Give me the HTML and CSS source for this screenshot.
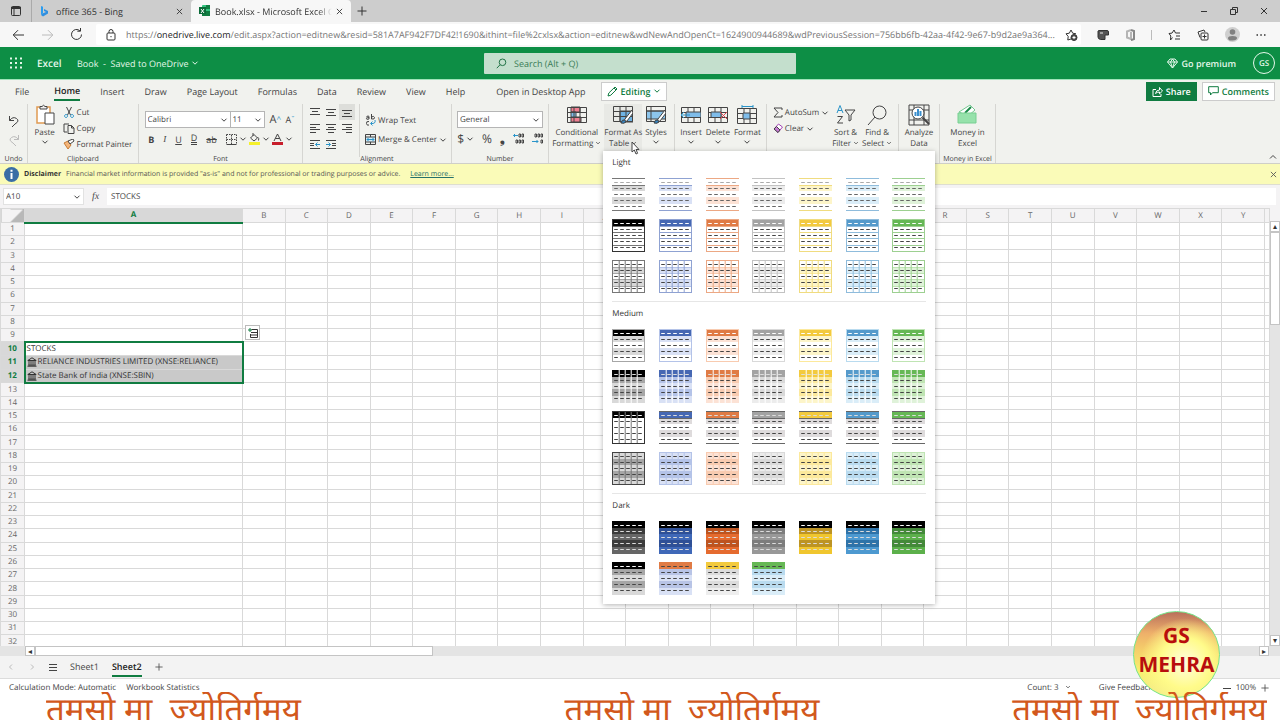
FILE: index.html
```html
<!DOCTYPE html>
<html lang="en">
<head>
    <meta charset="UTF-8">
    <title>Book.xlsx - Microsoft Excel Online</title>
    <link rel="stylesheet" href="styles.css">
</head>
<body>
    <svg class="symbols" aria-hidden="true">
        <symbol id="chev" viewBox="0 0 8 8"><path d="M1.500 2.700 4 5.200 6.500 2.700"/></symbol>
        <symbol id="close" viewBox="0 0 8 8"><path d="M1 1l6 6M7 1L1 7"/></symbol>
        <symbol id="plus" viewBox="0 0 10 10"><path d="M5 0.500v9M.5 5h9"/></symbol>
        <symbol id="bank" viewBox="0 0 10 10"><path d="M.8 3.500 5 .8l4.200 2.700zM2 4v4M4 4v4M6 4v4M8 4v4M.5 9.200h9M1.200 8.200h7.600"/></symbol>
        <symbol id="grid" viewBox="0 0 20 16"><path d="M.5.5h19v15H.5zM.5 5.500h19M.5 10.500h19M7 .5v15M13 .5v15"/></symbol>
    </svg>

    <!-- Browser -->
    <div class="tabstrip">
        <button class="tab-menu" aria-label="Tab actions"><svg width="12" height="12" viewBox="0 0 12 12"><rect x="1.500" y="1.500" width="9" height="9" rx="1"/><path d="M1 3h10" stroke-width="2"/><path d="M4 4v6"/></svg></button>
        <div class="browser-tab">
            <svg class="plain" width="9" height="11" viewBox="0 0 9 11"><path d="M1 0l2 .8v6.500L1 9z" fill="#2a9df0"/><path d="M1 9l2-1.700L6 6 4 5V3l4 2v2.500L3 10.500z" fill="#2f8fe0"/></svg>
            <span class="tab-title">office 365 - Bing</span>
            <button aria-label="Close tab"><svg width="7" height="7"><use href="#close"/></svg></button>
        </div>
        <div class="browser-tab active">
            <svg class="plain" width="12" height="12" viewBox="0 0 12 12"><rect x="3" y="0" width="8" height="11" rx="1" fill="#33c481"/><path d="M7 0h4v4H7zM3 6h8v5H3z" fill="#107c41"/><rect x="0" y="2" width="7" height="7" fill="#0b6a38"/><path d="M2 4l3 4M5 4L2 8" stroke="#fff"/></svg>
            <span class="tab-title fade">Book.xlsx - Microsoft Excel Online</span>
            <button aria-label="Close tab"><svg width="7" height="7"><use href="#close"/></svg></button>
        </div>
        <button class="new-tab" aria-label="New tab"><svg width="10" height="10"><use href="#plus"/></svg></button>
        <div class="window-buttons">
            <button aria-label="Minimize"><svg width="8" height="8" viewBox="0 0 8 8"><path d="M1 4.500h6"/></svg></button>
            <button aria-label="Restore"><svg width="8" height="8" viewBox="0 0 8 8"><path d="M.5 2.500h5v5h-5zM2.500 2V.5h5v5H6"/></svg></button>
            <button aria-label="Close"><svg width="8" height="8"><use href="#close"/></svg></button>
        </div>
    </div>
    <div class="addressbar">
        <button aria-label="Back"><svg width="13" height="12" viewBox="0 0 13 12"><path d="M12 6H1.500M6 1.200 1.200 6 6 10.800"/></svg></button>
        <button class="off" aria-label="Forward"><svg width="13" height="12" viewBox="0 0 13 12"><path d="M1 6h10.500M7 1.200 11.800 6 7 10.800"/></svg></button>
        <button aria-label="Reload"><svg width="13" height="13" viewBox="0 0 13 13"><path d="M11.500 6.500a5 5 0 1 1-1.600-3.700M10.500 0v3.200H7.300"/></svg></button>
        <div class="url-box">
            <svg width="10" height="12" viewBox="0 0 10 12"><rect x="1" y="4" width="8" height="7" rx="1"/><path d="M3 4V2.500a2 2 0 0 1 4 0V4M5 7v1.200"/></svg>
            <span class="url">https://<b>onedrive.live.com</b>/edit.aspx?action=editnew&amp;resid=581A7AF942F7DF42!1690&amp;ithint=file%2cxlsx&amp;action=editnew&amp;wdNewAndOpenCt=1624900944689&amp;wdPreviousSession=756bb6fb-42aa-4f42-9e67-b9d2ae9a364...</span>
            <button aria-label="Add favorite"><svg width="13" height="12" viewBox="0 0 13 12"><path d="M6 10 2.800 11l.4-3.600L1 4.800l3.300-.6L6 1l1.700 3.200 3.300.6"/><circle cx="9" cy="8.500" r="3" fill="#555"/><path d="M9 7v3M7.500 8.500h3" stroke="#fff"/></svg></button>
        </div>
        <div class="browser-tools">
            <svg width="12" height="12" viewBox="0 0 12 12"><path d="M2 1.500h8q1.500 0 1.500 1.500V6H8v4.500H3.500Q1 10 1 8V2z" fill="#555"/><path d="M3 4h3M9 8.500h3" stroke="#eee"/></svg>
            <svg width="10" height="12" viewBox="0 0 10 12"><path d="M6 1 2 2.500v6L6 10V3" stroke="#b5b5b5" stroke-width="2"/><path d="M6 1l3 1v8l-3 1.200" stroke="#888" stroke-width="2"/></svg>
            <span class="bar"></span>
            <svg width="13" height="12" viewBox="0 0 13 12"><path d="M4.500 8.500 2.500 11l.3-4L1 4.500l3-.4L6 1l1.500 3H12M8 7h4M7 10h5"/></svg>
            <svg width="12" height="12" viewBox="0 0 12 12"><rect x="4" y="4" width="7" height="7" rx="1"/><path d="M3 8.500 1 3l6-2 1 2M7.500 5.500v4M5.500 7.500h4"/></svg>
            <svg width="15" height="15" viewBox="0 0 15 15"><circle cx="7.500" cy="7.500" r="7.500" fill="#cfcfcf" stroke="none"/><circle cx="7.500" cy="5" r="2.800" fill="#808080" stroke="none"/><path d="M3 11q0-2 4.500-2t4.500 2-4.500 2.500T3 11z" fill="#808080" stroke="none"/></svg>
            <svg width="10" height="4" viewBox="0 0 10 4"><path d="M.5 2h1.500M4.300 2h1.500M8 2h1.500" stroke-width="1.500"/></svg>
        </div>
    </div>

    <!-- Excel title bar -->
    <header class="titlebar">
        <button class="waffle" aria-label="App launcher"><svg width="12" height="12" viewBox="0 0 12 12"><path d="M0 1.500h12M0 6h12M0 10.500h12" stroke-width="2" stroke-dasharray="2 3"/></svg></button>
        <span class="app-name">Excel</span>
        <button class="doc-name">Book &nbsp;-&nbsp; Saved to OneDrive <svg width="8" height="8"><use href="#chev"/></svg></button>
        <label class="search">
            <svg width="11" height="11" viewBox="0 0 11 11"><circle cx="6.500" cy="4.300" r="3.300"/><path d="M4 6.800.8 10.200"/></svg>
            <input type="text" placeholder="Search (Alt + Q)" aria-label="Search">
        </label>
        <div class="account">
            <button class="premium"><svg width="11" height="11" viewBox="0 0 11 11"><path d="M3 1h5l2.500 3-5 6-5-6zM.5 4h10M3.500 4l2 6 2-6M3.500 4 5.500 1l2 3"/></svg>Go premium</button>
            <button class="avatar">GS</button>
        </div>
    </header>

    <!-- Ribbon -->
    <nav class="ribbon-tabs">
        <button>File</button>
        <button class="current">Home</button>
        <button>Insert</button>
        <button>Draw</button>
        <button>Page Layout</button>
        <button>Formulas</button>
        <button>Data</button>
        <button>Review</button>
        <button>View</button>
        <button>Help</button>
        <button class="desktop">Open in Desktop App</button>
        <button class="boxed"><svg width="11" height="11" viewBox="0 0 11 11"><path d="M1 10l.8-3L8 1l2 2-6.200 6.200zM7 2l2 2"/></svg>Editing <svg width="8" height="8"><use href="#chev"/></svg></button>
        <div class="actions">
            <button class="boxed share"><svg width="11" height="11" viewBox="0 0 11 11"><path d="M4 3.500H1v7h8V8M3.500 7.500q.5-3.500 4-3.500V1.500L10.500 5 7.500 7.800V6Q5 6 3.500 7.500z"/></svg>Share</button>
            <button class="boxed comments"><svg width="11" height="10" viewBox="0 0 11 10"><path d="M.7.7h9.600v6H4.500L2.500 9V6.700H.7z"/></svg>Comments</button>
        </div>
    </nav>

    <div class="ribbon">
        <section class="group undo">
            <div class="tools column">
                <button aria-label="Undo"><svg width="12" height="13" viewBox="0 0 12 13"><path d="M1.500 1v4.500H6M1.500 5.500Q5 1 8.500 3.500T7 9l-3 3"/></svg></button>
                <button class="off" aria-label="Redo"><svg width="12" height="13" viewBox="0 0 12 13"><path d="M10.500 1v4.500H6M10.500 5.500Q7 1 3.500 3.500T5 9l3 3"/></svg></button>
            </div>
            <h2>Undo</h2>
        </section>
        <section class="group clipboard">
            <div class="tools">
                <button class="big"><svg width="22" height="22" viewBox="0 0 22 22"><path d="M3 3h13v16H3z" stroke="#e09b52" stroke-width="1.500" fill="#fff"/><path d="M6 5V2.500h2Q9.500 0 11 2.500h2V5z" fill="#eee"/><path d="M11 9h9v11h-9z" fill="#fff"/></svg>Paste<svg width="8" height="8"><use href="#chev"/></svg></button>
                <div class="column lines">
                    <button><svg width="12" height="11" viewBox="0 0 12 11"><path d="M3.500 0 7.500 8M8.500 0l-4 8"/><path d="M3 7.500a1.500 1.500 0 1 0 .1 0zM9 7.500a1.500 1.500 0 1 0 .1 0z" stroke="#2a94c9"/></svg>Cut</button>
                    <button><svg width="12" height="11" viewBox="0 0 12 11"><path d="M4 9H1V1h5M5 2.500h3.500L11 5v5.500H5zM8.500 2.500V5H11"/></svg>Copy</button>
                    <button><svg width="12" height="11" viewBox="0 0 12 11"><path d="M1 4 5 2l3 4-3 4z" fill="#f4b57a" stroke="#c87d35"/><path d="M5 2l5-2 1 2-4 3z" fill="#fff"/></svg>Format Painter</button>
                </div>
            </div>
            <h2>Clipboard</h2>
        </section>
        <section class="group font">
            <div class="tools column">
                <div class="row">
                    <span class="picker name"><select aria-label="Font"><option>Calibri</option></select><svg width="8" height="8"><use href="#chev"/></svg></span>
                    <span class="picker size"><select aria-label="Font size"><option>11</option></select><svg width="8" height="8"><use href="#chev"/></svg></span>
                    <button class="letter large">A<sup>^</sup></button>
                    <button class="letter">A<sup>ˇ</sup></button>
                </div>
                <div class="row marks">
                    <button><b>B</b></button>
                    <button><i>I</i></button>
                    <button><u>U</u></button>
                    <button><span class="double">D</span></button>
                    <button><s>ab</s></button>
                    <button class="drop"><svg width="11" height="11" viewBox="0 0 11 11"><path d="M.5.5h10v9.500M.5.500V10M5.500 1v9M.5 5.500h10" stroke-dasharray="1.500 1"/><path d="M.5 10.500h10"/></svg><svg width="8" height="8"><use href="#chev"/></svg></button>
                    <button class="drop"><svg width="11" height="12" viewBox="0 0 11 12"><path d="M1.500 5 5 1.500l3.500 3.500L5 8zM4 3V0M8.500 4q2 1.500 1 3.500"/><path d="M0 10.500h11" stroke="#f5f02a" stroke-width="3"/></svg><svg width="8" height="8"><use href="#chev"/></svg></button>
                    <button class="drop"><svg width="11" height="12" viewBox="0 0 11 12"><path d="M2 8 5.500 1 9 8M3.300 5.500h4.400"/><path d="M0 10.500h11" stroke="#c81e2b" stroke-width="3"/></svg><svg width="8" height="8"><use href="#chev"/></svg></button>
                </div>
            </div>
            <h2>Font</h2>
        </section>
        <section class="group alignment">
            <div class="tools">
                <div class="align-grid">
                    <button aria-label="Top"><svg width="10" height="9" viewBox="0 0 10 9"><path d="M0 .5h10M2 3.500h6M0 6.500h10"/></svg></button>
                    <button aria-label="Middle"><svg width="10" height="9" viewBox="0 0 10 9"><path d="M0 1.500h10M2 4.500h6M0 7.500h10"/></svg></button>
                    <button class="on" aria-label="Bottom"><svg width="10" height="9" viewBox="0 0 10 9"><path d="M0 2.500h10M2 5.500h6M0 8.500h10"/></svg></button>
                    <button aria-label="Left"><svg width="10" height="9" viewBox="0 0 10 9"><path d="M0 .5h10M0 3.500h6M0 5.500h10M0 8.500h6"/></svg></button>
                    <button aria-label="Center"><svg width="10" height="9" viewBox="0 0 10 9"><path d="M0 .5h10M2 3.500h6M0 5.500h10M2 8.500h6"/></svg></button>
                    <button aria-label="Right"><svg width="10" height="9" viewBox="0 0 10 9"><path d="M0 .5h10M4 3.500h6M0 5.500h10M4 8.500h6"/></svg></button>
                    <button aria-label="Decrease indent"><svg width="10" height="9" viewBox="0 0 10 9"><path d="M0 .5h10M0 3.500h4M0 5.500h4M0 8.500h10"/><path d="M10 4.500H5.500M7.500 2.500l-2 2 2 2" stroke="#2a94c9"/></svg></button>
                    <button aria-label="Increase indent"><svg width="10" height="9" viewBox="0 0 10 9"><path d="M0 .5h10M6 3.500h4M6 5.500h4M0 8.500h10"/><path d="M0 4.500h4.500M2.500 2.500l2 2-2 2" stroke="#2a94c9"/></svg></button>
                </div>
                <div class="column lines wrap">
                    <button><svg width="11" height="12" viewBox="0 0 11 12"><path d="M1.500 2.500q2-1 2.500 0V5Q1 6 1.500 4.200T4 3.500M6.500 0v5Q10 5.500 9.500 3.500T6.500 3M4 7.500Q1 7 1.500 9.500T4 11"/><path d="M10 6q1 4-4 3.500M7.500 7.500l-2 2 2 2" stroke="#2a94c9"/></svg>Wrap Text</button>
                    <button><svg width="11" height="11" viewBox="0 0 11 11"><path d="M.5.5h10v10H.5zM5.500 0v3M5.500 8v3"/><path d="M.5 3h10v5H.5z" fill="#d5ecf7"/><path d="M2 5.500h7M3.500 4 2 5.500 3.500 7M7.500 4 9 5.500 7.500 7" stroke="#2a94c9"/></svg>Merge &amp; Center <svg width="8" height="8"><use href="#chev"/></svg></button>
                </div>
            </div>
            <h2>Alignment</h2>
        </section>
        <section class="group number">
            <div class="tools column">
                <div class="row"><span class="picker general"><select aria-label="Number format"><option>General</option></select><svg width="8" height="8"><use href="#chev"/></svg></span></div>
                <div class="row formats">
                    <button class="drop">$<svg width="8" height="8"><use href="#chev"/></svg></button>
                    <button>%</button>
                    <button><b>❟</b></button>
                    <button aria-label="Increase decimal"><svg width="11" height="11" viewBox="0 0 11 11"><path d="M6 1h1.500v3H6zM9 1h1.500v3H9zM3 7h1.500v3H3zM6 7h1.500v3H6zM9 7h1.500v3H9z"/><path d="M5 2.500H.5M2 1 .5 2.500 2 4" stroke="#2a94c9"/></svg></button>
                    <button aria-label="Decrease decimal"><svg width="11" height="11" viewBox="0 0 11 11"><path d="M3 1h1.500v3H3zM6 1h1.500v3H6zM9 1h1.500v3H9zM9 7h1.500v3H9z"/><path d="M0 8.500h6M4.500 7 6 8.500 4.500 10" stroke="#2a94c9"/></svg></button>
                </div>
            </div>
            <h2>Number</h2>
        </section>
        <section class="group styles">
            <div class="tools">
                <button class="big"><svg width="20" height="20" viewBox="0 0 20 16"><path d="M4 0h9v5H4zM4 10h10v5H4z" fill="#f07f91"/><path d="M4 5h5v5H4z" fill="#7fbdea"/><use href="#grid"/></svg><span>Conditional<br>Formatting <svg width="6" height="6"><use href="#chev"/></svg></span></button>
                <div class="menu-anchor">
                    <button class="big pressed"><svg width="20" height="20" viewBox="0 0 20 18"><path d="M7 5h13v11H7z" fill="#6fb3e3"/><use href="#grid" height="16"/><path d="M19 4l-7 9-2 4 4-2 6-8z" fill="#fff"/><path d="M8 17q1-4 4-3l1 2q-2 2-5 1z" fill="#3583bf"/></svg><span>Format As<br>Table <svg width="6" height="6"><use href="#chev"/></svg></span></button>
                    <div class="gallery" role="menu" id="gallery"></div>
                    <svg class="cursor" width="9" height="14" viewBox="0 0 9 14"><path d="M1 1v10l2.300-2 1.700 4 1.600-.7L5 8.500h3z" fill="#fff"/></svg>
                </div>
                <button class="big"><svg width="20" height="20" viewBox="0 0 20 18"><path d="M0 5h20v8H0z" fill="#8cc5ec"/><path d="M.5.500h19v15H.5zM.5 5h19M5 0v15"/><path d="M19 4l-7 9-2 4 4-2 6-8z" fill="#fff"/><path d="M8 17q1-4 4-3l1 2q-2 2-5 1z" fill="#3583bf"/></svg>Styles<svg width="8" height="8"><use href="#chev"/></svg></button>
            </div>
        </section>
        <section class="group cells">
            <div class="tools">
                <button class="big"><svg width="20" height="20" viewBox="0 0 20 16"><use href="#grid"/><path d="M5 5h15v5.500H5z" fill="#7fbdea"/><path d="M9 8H0M3 5 0 8l3 3" stroke="#2a94c9"/></svg>Insert<svg width="8" height="8"><use href="#chev"/></svg></button>
                <button class="big"><svg width="20" height="20" viewBox="0 0 20 16"><use href="#grid"/><path d="M3 5h10v5.500H3z" fill="#7fbdea"/><path d="M12 5l7 7M19 5l-7 7" stroke="#e0434f"/></svg>Delete<svg width="8" height="8"><use href="#chev"/></svg></button>
                <button class="big"><svg width="20" height="20" viewBox="0 0 20 20"><use href="#grid" y="3" height="16"/><path d="M6 8h7v6H6z" fill="#7fbdea"/><path d="M5 1.500h11M5 0v3M16 0v3" stroke="#2a94c9"/></svg>Format<svg width="8" height="8"><use href="#chev"/></svg></button>
            </div>
        </section>
        <section class="group editing">
            <div class="tools">
                <div class="column lines">
                    <button><svg width="10" height="11" viewBox="0 0 10 11"><path d="M9 3V1H1l4 4.500L1 10h8V8"/></svg>AutoSum <svg width="8" height="8"><use href="#chev"/></svg></button>
                    <button><svg width="10" height="11" viewBox="0 0 10 11"><path d="M1 6 5.500 1 9.500 4 5 9.500z" fill="#fff" stroke="#a243b5"/><path d="M1 6l2.500-2.500L7 7 5 9.500z" fill="#c77bd4"/></svg>Clear <svg width="8" height="8"><use href="#chev"/></svg></button>
                </div>
                <button class="big"><svg width="20" height="22" viewBox="0 0 20 22"><path d="M1 9 4 1.500 7 9M2 6.500h4" stroke="#2a94c9"/><path d="M1.500 12.500h5l-5 6.500h5.500M9 6h10l-4 5v5l-2 1v-6z"/></svg><span>Sort &amp;<br>Filter <svg width="6" height="6"><use href="#chev"/></svg></span></button>
                <button class="big"><svg width="20" height="22" viewBox="0 0 20 22"><circle cx="12.500" cy="8.500" r="6.500"/><path d="M8 13l-7 8"/></svg><span>Find &amp;<br>Select <svg width="6" height="6"><use href="#chev"/></svg></span></button>
            </div>
        </section>
        <section class="group analyze">
            <div class="tools">
                <button class="big"><svg width="22" height="22" viewBox="0 0 22 22"><path d="M1 1h20v20H1zM1 6h20M1 16h20M6 1v20M16 1v20"/><circle cx="10" cy="9" r="6" fill="#fff"/><path d="M14.500 13.500 21 20" stroke-width="2"/><path d="M7.500 12V8M10 12V5M12.500 12V7" stroke="#3b8fcd" stroke-width="2"/></svg><span>Analyze<br>Data</span></button>
            </div>
        </section>
        <section class="group money">
            <div class="tools">
                <button class="big"><svg width="20" height="22" viewBox="0 0 20 22"><path d="M2 8 13 1l5 5-7 6z" fill="#fff" stroke="#74c990"/><path d="M8 9l6-6" stroke="#1a8a48" stroke-width="2"/><path d="M1 9h18v10H1z" fill="#96e2ab" stroke="#79cf92"/></svg><span>Money in<br>Excel</span></button>
            </div>
            <h2>Money in Excel</h2>
        </section>
        <button class="collapse" aria-label="Collapse ribbon"><svg width="8" height="8" viewBox="0 0 8 8"><path d="M1 5.500 4 2.500l3 3"/></svg></button>
    </div>

    <div class="disclaimer">
        <svg width="15" height="15" viewBox="0 0 15 15"><circle cx="7.500" cy="7.500" r="7.500" fill="#3a6ea5" stroke="none"/><path d="M7.500 6v6M7.500 2.800v2" stroke="#fff" stroke-width="2"/></svg>
        <b>Disclaimer</b>
        <span>Financial market information is provided "as-is" and not for professional or trading purposes or advice.</span>
        <a href="#">Learn more...</a>
        <button aria-label="Dismiss"><svg width="7" height="7"><use href="#close"/></svg></button>
    </div>

    <div class="formula-bar">
        <span class="picker cell-name"><input type="text" value="A10" aria-label="Name box"><svg width="8" height="8"><use href="#chev"/></svg></span>
        <span class="fx">fx</span>
        <input class="formula" type="text" value="STOCKS" aria-label="Formula">
    </div>

    <!-- Sheet -->
    <main class="sheet">
        <div class="cells-pane">
            <table id="cells"></table>
        </div>
        <div class="vscroll">
            <button aria-label="Scroll up">▴</button>
            <div class="thumb"></div>
            <button aria-label="Scroll down">▾</button>
        </div>
    </main>
    <div class="hscroll">
        <button aria-label="Scroll left">◂</button>
        <div class="thumb"></div>
        <button aria-label="Scroll right">▸</button>
    </div>

    <div class="sheet-tabs">
        <button class="off" aria-label="Previous sheet"><svg width="8" height="8" viewBox="0 0 8 8"><path d="M5 1.500 2.500 4 5 6.500"/></svg></button>
        <button class="off" aria-label="Next sheet"><svg width="8" height="8" viewBox="0 0 8 8"><path d="M3 1.500 5.500 4 3 6.500"/></svg></button>
        <button aria-label="All sheets"><svg width="8" height="8" viewBox="0 0 8 8"><path d="M0 1.500h8M0 4.500h8M0 7.500h8"/></svg></button>
        <button class="sheet-tab">Sheet1</button>
        <button class="sheet-tab current">Sheet2</button>
        <button aria-label="New sheet"><svg width="8" height="8"><use href="#plus"/></svg></button>
    </div>
    <footer class="statusbar">
        <span>Calculation Mode: Automatic</span>
        <span>Workbook Statistics</span>
        <span class="count">Count: 3 &nbsp; <svg width="6" height="6"><use href="#chev"/></svg></span>
        <span class="feedback">Give Feedback</span>
        <span class="zoom"><button aria-label="Zoom out"><svg width="8" height="8" viewBox="0 0 8 8"><path d="M0 4.500h8"/></svg></button>100%<button aria-label="Zoom in"><svg width="8" height="8"><use href="#plus"/></svg></button></span>
    </footer>

    <div class="logo">GS<br>MEHRA</div>
    <div class="ticker" lang="hi">
        <span>तमसो मा &nbsp;ज्योतिर्गमय</span>
        <span>तमसो मा &nbsp;ज्योतिर्गमय</span>
        <span>तमसो मा &nbsp;ज्योतिर्गमय</span>
    </div>

    <script src="script.js"></script>
</body>
</html>
```
FILE: styles.css
```css
* {
    box-sizing: border-box;
}
body {
    margin: 0;
    height: 100vh;
    display: flex;
    flex-direction: column;
    overflow: hidden;
    position: relative;
    font-family: "Open Sans", "Noto Sans", sans-serif;
    font-size: 8px;
    line-height: 11px;
    text-rendering: geometricPrecision;
    color: #444;
    background: #fff;
}
button, input, select {
    font: inherit;
    text-rendering: inherit;
    color: inherit;
    background: none;
    border: 0;
    padding: 0;
    margin: 0;
    outline: 0;
}
button {
    display: flex;
    align-items: center;
    white-space: nowrap;
}
svg {
    fill: none;
    stroke: currentColor;
    stroke-width: 1;
    flex: none;
}
svg.plain {
    stroke: none;
}
.symbols {
    position: absolute;
    width: 0;
    height: 0;
}
.off {
    color: #bbb;
}

/* browser */
.tabstrip {
    display: flex;
    align-items: center;
    height: 22px;
    background: #cdcdcd;
    font-size: 9px;
    color: #333;
}
.tab-menu {
    padding: 0 9px 0 10px;
}
.browser-tab {
    display: flex;
    align-items: center;
    gap: 7px;
    width: 160px;
    height: 100%;
    padding: 0 8px;
    border-left: 1px solid #aaa;
}
.browser-tab.active {
    gap: 4px;
    background: #f7f7f7;
    border: 0;
    border-radius: 4px 4px 0 0;
}
.tab-title {
    flex: 1;
    white-space: nowrap;
    overflow: hidden;
}
.fade {
    -webkit-mask-image: linear-gradient(90deg, #000 88%, transparent);
    mask-image: linear-gradient(90deg, #000 88%, transparent);
}
.new-tab {
    margin-left: 6px;
}
.window-buttons {
    display: flex;
    gap: 22px;
    margin-left: auto;
    padding-right: 12px;
}
.addressbar {
    display: flex;
    align-items: center;
    gap: 16px;
    height: 25px;
    padding: 0 14px 0 12px;
    background: #f7f7f7;
    color: #333;
}
.url-box {
    flex: 1;
    min-width: 0;
    display: flex;
    align-items: center;
    gap: 10px;
    height: 21px;
    margin-left: -3px;
    padding: 0 5px 0 10px;
    background: #fff;
    border-radius: 2px;
}
.url {
    flex: 1;
    white-space: nowrap;
    font-size: 9px;
    line-height: 14px;
    color: #767676;
}
.url b {
    font-weight: normal;
    color: #222;
}
.browser-tools {
    display: flex;
    align-items: center;
    gap: 16px;
}
.browser-tools .bar {
    width: 1px;
    height: 10px;
    background: #bbb;
}

/* title bar */
.titlebar {
    display: grid;
    grid-template-columns: 37px 40px 1fr 312px 484px;
    align-items: center;
    height: 33px;
    background: #0d8e45;
    border-bottom: 1px solid #9fe3b9;
    color: #e4f7ea;
    font-size: 9px;
}
.waffle {
    padding-left: 10px;
}
.app-name {
    font-weight: 600;
    font-size: 10px;
}
.doc-name {
    gap: 2px;
}
.search {
    display: flex;
    align-items: center;
    gap: 7px;
    height: 21px;
    padding: 0 12px;
    background: #c4dfcd;
    color: #217346;
    border-radius: 1px;
}
.search input {
    flex: 1;
}
.search input::placeholder {
    color: #3b7d57;
}
.account {
    display: flex;
    justify-content: flex-end;
    gap: 17px;
    padding-right: 5px;
    font-weight: 600;
}
.premium {
    gap: 4px;
}
.avatar {
    justify-content: center;
    width: 22px;
    height: 22px;
    border: 1px solid #e4f7ea;
    border-radius: 50%;
    font-size: 8px;
}

/* ribbon */
.ribbon-tabs {
    display: flex;
    align-items: center;
    gap: 20px;
    height: 22px;
    padding: 0 5px 0 15px;
    background: #f1f2ee;
    font-size: 9px;
}
.ribbon-tabs button {
    height: 19px;
}
.ribbon-tabs .current {
    margin-left: 5px;
    font-weight: 600;
    color: #222;
    border-bottom: 2px solid #107c41;
}
.ribbon-tabs .desktop {
    margin-left: 11px;
}
.ribbon-tabs .boxed {
    gap: 3px;
    padding: 0 5px;
    margin-left: -5px;
    background: #fff;
    border: 1px solid #ccc;
    color: #107c41;
    font-weight: 600;
}
.actions {
    display: flex;
    gap: 10px;
    margin-left: auto;
}
.ribbon-tabs .share {
    background: #107c41;
    border-color: #107c41;
    color: #fff;
}
.ribbon {
    display: flex;
    height: 62px;
    padding-top: 2px;
    background: #f1f2ee;
    border-bottom: 1px solid #cfcfc8;
}
.group {
    display: flex;
    flex-direction: column;
    border-right: 1px solid #d6d6d2;
}
.group h2 {
    margin: 0;
    font-size: 7px;
    font-weight: normal;
    line-height: 6px;
    text-align: center;
    white-space: nowrap;
}
.tools {
    display: flex;
    flex: 1;
    justify-content: center;
}
.column {
    display: flex;
    flex-direction: column;
}
.row {
    display: flex;
    align-items: center;
}
.big {
    flex-direction: column;
    height: 47px;
    text-align: center;
}
.big > svg:first-child {
    height: 22px;
    margin-bottom: 1px;
}
.lines {
    gap: 5px;
    padding-top: 3px;
}
.lines button {
    gap: 2px;
}
.undo {
    width: 28px;
}
.undo .tools {
    align-items: center;
    justify-content: center;
    gap: 6px;
}
.clipboard {
    width: 111px;
}
.clipboard .tools {
    gap: 7px;
}
.font {
    width: 164px;
}
.font .tools, .number .tools {
    padding-top: 7px;
    justify-content: flex-start;
    align-items: center;
    gap: 5px;
}
.picker {
    display: flex;
    align-items: center;
    height: 17px;
    padding: 0 2px;
    background: #fff;
    border: 1px solid #b5b5b5;
}
.picker select, .picker input {
    flex: 1;
    min-width: 0;
    appearance: none;
}
.name {
    width: 86px;
}
.size {
    width: 34px;
    border-left: 0;
}
.letter {
    width: 16px;
    padding-left: 5px;
    font-size: 9px;
}
.letter.large {
    font-size: 11px;
}
.letter sup {
    color: #2a94c9;
    font-size: 8px;
    line-height: 8px;
}
.marks {
    gap: 9px;
    font-size: 9px;
}
.marks i {
    font-family: "Liberation Serif", serif;
}
.double {
    border-bottom: 3px double #444;
    line-height: 9px;
}
.drop {
    gap: 2px;
}
.marks .drop {
    margin-right: -7px;
}
.marks .drop:last-child {
    margin-right: 0;
}
.alignment {
    width: 149px;
}
.alignment .tools {
    gap: 4px;
}
.align-grid {
    display: grid;
    grid-template-columns: repeat(3, 16px);
    grid-auto-rows: 16px;
}
.align-grid button {
    justify-content: center;
}
.on {
    background: #dddeda;
}
.lines.wrap {
    gap: 8px;
    padding: 10px 0 0 5px;
    border-left: 1px solid #d6d6d2;
}
.number {
    width: 97px;
}
.general {
    width: 86px;
}
.formats {
    gap: 8px;
    font-size: 12px;
}
.styles {
    width: 126px;
}
.styles .tools {
    gap: 3px;
    padding-right: 4px;
}
.menu-anchor {
    position: relative;
}
.pressed {
    background: #e8e9e5;
}
.cells {
    width: 92px;
}
.cells .tools {
    gap: 4px;
}
.editing {
    width: 132px;
}
.editing .tools {
    gap: 3px;
}
.analyze {
    width: 41px;
}
.money {
    width: 56px;
}
.collapse {
    align-self: flex-end;
    margin: 0 3px 2px auto;
}
.cursor {
    position: absolute;
    z-index: 12;
    left: 27px;
    top: 37px;
}

/* table styles gallery */
.gallery {
    position: absolute;
    z-index: 10;
    top: 47px;
    left: -1px;
    width: 332px;
    padding-bottom: 9px;
    background: #fff;
    box-shadow: 0 1px 5px rgba(0,0,0,0.3);
}
.gallery h3 {
    margin: 0 9px 10px;
    padding-top: 6px;
    font-size: 8px;
    font-weight: normal;
    color: #333;
}
.gallery h3:not(:first-child) {
    margin-top: 8px;
    border-top: 1px solid #e6e6e6;
}
.swatches {
    display: grid;
    grid-template-columns: repeat(7, 33px);
    justify-content: space-between;
    row-gap: 8px;
    padding: 0 10px 0 9px;
}
.swatches svg {
    stroke: none;
    display: block;
}

/* disclaimer and formula bar */
.disclaimer {
    display: flex;
    align-items: center;
    gap: 5px;
    height: 21px;
    padding: 0 3px 0 4px;
    background: #fafbb8;
    border-bottom: 1px solid #deded0;
    color: #555;
    font-size: 7px;
    white-space: nowrap;
}
.disclaimer b {
    color: #333;
}
.disclaimer a {
    margin-left: 5px;
    color: #25706a;
}
.disclaimer button {
    margin-left: auto;
}
.formula-bar {
    display: flex;
    align-items: center;
    height: 23px;
    padding: 0 4px 0 3px;
    background: #f4f3f4;
}
.cell-name {
    width: 81px;
    height: 17px;
    border-color: #e2e2e2;
}
.fx {
    width: 23px;
    text-align: center;
    font: italic 10px "Liberation Serif", serif;
}
.formula {
    flex: 1;
    height: 17px;
    padding: 0 4px;
    background: #fff;
}

/* sheet */
.sheet {
    flex: 1;
    min-height: 0;
    display: flex;
    background: #f4f3f4;
}
.cells-pane {
    flex: 1;
    min-width: 0;
    overflow: hidden;
}
.sheet table {
    width: 100%;
    height: calc(100% + 3px);
    table-layout: fixed;
    border-collapse: collapse;
    line-height: 10px;
}
.sheet th, .sheet td {
    padding: 0;
    border: 1px solid #d9d9d9;
}
.sheet th {
    font-weight: normal;
    color: #666;
    background: #f4f3f4;
}
.sheet thead th {
    height: 14px;
}
.sheet td {
    background: #fff;
    color: #333;
    padding-left: 1px;
    white-space: nowrap;
}
.sheet .num {
    width: 24px;
    background: linear-gradient(135deg, #f4f3f4 60%, #b8b8b8 60%);
}
.sheet .wide {
    width: 218px;
}
.sheet .edge {
    width: 5px;
}
.sheet th.picked {
    background: #d8d8d8;
    color: #107c41;
    font-weight: bold;
}
.sheet thead .picked {
    border-bottom: 2px solid #107c41;
}
.sheet td.first {
    border-top: 2px solid #107c41;
}
.sheet td.picked {
    border-left: 2px solid #107c41;
    border-right: 2px solid #107c41;
}
.sheet td.shade {
    background: #c9c9c9;
}
.sheet td.last {
    border-bottom: 2px solid #107c41;
}
.sheet td .bank {
    display: inline-block;
    height: 10px;
    margin-right: 1px;
    vertical-align: top;
}
.sheet .corner {
    position: relative;
}
.corner button {
    position: absolute;
    left: 2px;
    top: -4px;
    justify-content: center;
    width: 15px;
    height: 15px;
    background: #fff;
    border: 1px solid #bbb;
}
.vscroll {
    display: flex;
    flex-direction: column;
    width: 10px;
    margin-top: 13px;
    background: #e4e4e4;
}
.vscroll button, .hscroll button {
    justify-content: center;
    width: 10px;
    height: 11px;
    background: #fff;
    border: 1px solid #c4c4c4;
    color: #333;
}
.vscroll .thumb {
    height: 93px;
    margin-bottom: auto;
    background: #fff;
    border: 1px solid #c4c4c4;
}
.hscroll {
    display: flex;
    height: 10px;
    padding: 0 11px 0 25px;
    background: #e4e4e4;
}
.hscroll button {
    height: 10px;
}
.hscroll .thumb {
    width: 32%;
    margin-right: auto;
    background: #fff;
    border: 1px solid #c4c4c4;
}

/* bottom */
.sheet-tabs {
    display: flex;
    align-items: center;
    gap: 13px;
    height: 23px;
    padding-left: 7px;
    background: #f3f3f3;
    border-bottom: 1px solid #dcdcdc;
    font-size: 9px;
}
.sheet-tab {
    height: 20px;
    border-bottom: 2px solid transparent;
}
.sheet-tab.current {
    font-weight: 600;
    color: #222;
    border-color: #107c41;
}
.statusbar {
    display: flex;
    align-items: flex-start;
    gap: 10px;
    height: 41px;
    padding: 3px 11px 0 9px;
}
.count {
    margin-left: auto;
}
.feedback {
    margin-left: 18px;
}
.zoom {
    display: flex;
    gap: 5px;
    margin-left: 60px;
}
.logo {
    position: absolute;
    z-index: 20;
    right: 60px;
    top: 611px;
    width: 87px;
    height: 87px;
    padding-top: 10px;
    border: 1px solid #76e58a;
    border-radius: 50%;
    background: radial-gradient(ellipse at 60% 60%, #fffde0 0, #fffb8a 35%, rgba(255,246,110,0) 62%), linear-gradient(#b9705c 0, #eeb06a 25%, #f5cf6a 45%, #f8f070 70%, #f3ea8e 100%);
    font: bold 21px/29px "Open Sans", sans-serif;
    text-align: center;
    color: #b80d0d;
}
.ticker {
    position: absolute;
    z-index: 21;
    left: 46px;
    right: 13px;
    bottom: 0;
    height: 28px;
    display: flex;
    justify-content: space-between;
    overflow: hidden;
    font: 33px/34px "Noto Sans", "Noto Sans Devanagari", sans-serif;
    white-space: nowrap;
    color: #d2581c;
}
.ticker span:nth-child(2) {
    margin-left: 71px;
}
```
FILE: script.js
```js
// Sheet
const columns = 'ABCDEFGHIJKLMNOPQRSTUVWXY'.split('');
const bank = '<svg class="bank" width="10" height="10"><use href="#bank"/></svg>';
const data = {
    10: 'STOCKS',
    11: bank + 'RELIANCE INDUSTRIES LIMITED (XNSE:RELIANCE)',
    12: bank + 'State Bank of India (XNSE:SBIN)'
};
const quick = '<button aria-label="Insert data"><svg width="10" height="10" viewBox="0 0 10 10"><path d="M3.500 1.500h6v8h-7V6M3 4.500h6M3 7h6"/><path d="M2 0v4M0 2h4" stroke="#107c41"/></svg></button>';

let html = '<thead><tr><th class="num"></th>';
columns.forEach((c, i) => {
    html += `<th class="${i === 0 ? 'wide picked' : ''}">${c}</th>`;
});
html += '<th class="edge"></th></tr></thead><tbody>';
for (let r = 1; r <= 32; r++) {
    const picked = r >= 10 && r <= 12;
    html += `<tr><th class="${picked ? 'picked' : ''}">${r}</th>`;
    let cls = picked ? 'picked' : '';
    if (r === 10) cls += ' first';
    if (r > 10 && picked) cls += ' shade';
    if (r === 12) cls += ' last';
    html += `<td class="${cls}">${data[r] || ''}</td>`;
    for (let i = 1; i <= columns.length; i++) {
        html += r === 9 && i === 1 ? `<td class="corner">${quick}</td>` : '<td></td>';
    }
    html += '</tr>';
}
document.getElementById('cells').innerHTML = html + '</tbody>';

// Table styles gallery: main, strong tint, light tint, dark shade, dark plain, inner lines
const colors = [
    ['#000000', '#a6a6a6', '#d9d9d9', '#3c3c3c', '#666666', '#777777'],
    ['#4668b3', '#b4c3e8', '#d9e1f5', '#2f5096', '#3f68b8', '#8fa2d2'],
    ['#e07b45', '#f8cbb0', '#fce2d5', '#bd5420', '#e56b2f', '#eca884'],
    ['#a3a3a3', '#d9d9d9', '#ececec', '#7d7d7d', '#989898', '#c2c2c2'],
    ['#f3ca3e', '#fce99c', '#fdf5c9', '#bd9424', '#f0c62e', '#f0dc80'],
    ['#559acb', '#b9dbef', '#daedf8', '#2f73a8', '#4d99d0', '#8fbcdc'],
    ['#66b855', '#bfe4b3', '#dff2d9', '#44893a', '#5cb04b', '#9dd091']
];
const tops = [0, 7, 13, 19, 26, 33];

function swatch(o) {
    let s = '<svg width="33" height="33" viewBox="0 0 33 33">';
    for (let r = 0; r < 5; r++) {
        const h = tops[r + 1] - tops[r];
        const fill = r === 0 ? o.head : (r % 2 ? o.band : o.plain);
        s += `<rect x="0" y="${tops[r]}" width="33" height="${h}" fill="${fill || '#fff'}"/>`;
        if (o.lines && r) s += `<rect x="0" y="${tops[r]}" width="33" height="1" fill="${o.lines}"/>`;
    }
    if (o.cols) {
        for (let c = 1; c < 5; c++) s += `<rect x="${c * 6 + 0.7}" y="0" width="1" height="33" fill="${o.cols}"/>`;
    }
    if (o.rules) {
        [0, 7, 32].forEach(y => {
            s += `<rect x="0" y="${y}" width="33" height="1" fill="${o.rules}"/>`;
        });
    }
    if (o.border) s += `<rect x="0.5" y="0.5" width="32" height="32" fill="none" stroke="${o.border}"/>`;
    for (let r = 0; r < 5; r++) {
        for (let c = 0; c < 5; c++) {
            const ink = r === 0 ? (o.headInk || '#444') : (o.ink || '#444');
            s += `<rect x="${c * 6 + 2.2}" y="${[4, 10, 16, 22, 28][r]}" width="3.6" height="1" fill="${ink}"/>`;
        }
    }
    return s + '</svg>';
}

const light = [
    c => ({ band: c[2], rules: c[5], headInk: '#aaa', ink: '#666' }),
    c => ({ head: c[0], headInk: '#fff', lines: c[5], border: c[0] === '#000000' ? '#333' : c[5] }),
    c => ({ band: c[2], lines: c[1], cols: c[5], border: c[5] })
];
const medium = [
    c => ({ head: c[0], headInk: '#fff', band: c[2], border: c[1] }),
    c => ({ head: c[0], headInk: '#ddd', band: c[1], plain: c[2], cols: '#fff' }),
    c => c[0] === '#000000'
        ? { head: c[0], headInk: '#fff', cols: '#777', border: '#333' }
        : { head: c[0], headInk: '#ddd', band: '#dedbdc', rules: '#666' },
    c => ({ head: c[2], band: c[1], plain: c[2], cols: c[0] === '#000000' ? '#777' : c[1], border: c[0] === '#000000' ? '#444' : c[1] })
];
const dark = [
    c => ({ head: '#000', headInk: '#fff', band: c[3], plain: c[4], ink: '#ddd' })
];
const mixed = [
    { head: '#000', headInk: '#fff', band: '#a6a6a6', plain: '#d9d9d9' },
    { head: '#e07b45', band: '#b8c4e6', plain: '#d9e1f5' },
    { head: '#f3ca3e', band: '#dcdcdc', plain: '#eeeeee' },
    { head: '#66b855', band: '#b9dbef', plain: '#daedf8' }
];

function section(title, rows, extra) {
    let s = `<h3>${title}</h3><div class="swatches">`;
    rows.forEach(row => colors.forEach(c => {
        s += `<button role="menuitem" aria-label="${title} table style">${swatch(row(c))}</button>`;
    }));
    (extra || []).forEach(o => {
        s += `<button role="menuitem" aria-label="${title} table style">${swatch(o)}</button>`;
    });
    return s + '</div>';
}
document.getElementById('gallery').innerHTML =
    section('Light', light) + section('Medium', medium) + section('Dark', dark, mixed);
```
